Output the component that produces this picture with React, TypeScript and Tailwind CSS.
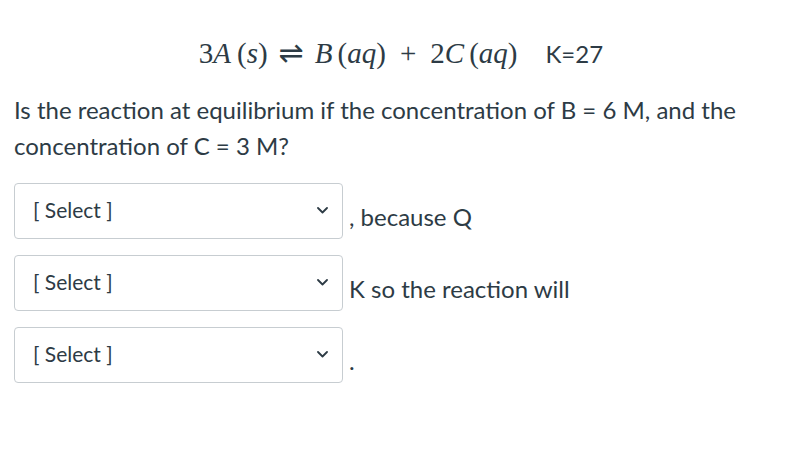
import React from 'react';

const Chevron = () => (
  <svg width="11" height="7" viewBox="0 0 11 7" fill="none" className="shrink-0">
    <path d="M1 1l4.5 4.5L10 1" stroke="#2d3b45" strokeWidth="1.8" strokeLinecap="round" strokeLinejoin="round" />
  </svg>
);

const SelectBox = () => (
  <div className="w-[329px] h-[56px] shrink-0 border border-[#c7cdd1] rounded-[4px] bg-white flex items-center justify-between pl-[18px] pr-[14px]">
    <span className="text-[21px] text-[#2d3b45] -mt-[2px]">[ Select ]</span>
    <Chevron />
  </div>
);

const Mi = ({ children }: { children: React.ReactNode }) => <span className="italic">{children}</span>;

export default function App() {
  return (
    <div className="w-[792px] h-[451px] bg-white text-[#2d3b45] font-['Lato','Noto_Sans',sans-serif] pt-[32px]">
      <div className="flex items-baseline justify-center pl-[10px]">
        <span className="font-['Liberation_Serif','DejaVu_Serif',serif] text-[29px] flex items-baseline">
          <span>3<Mi>A</Mi></span>
          <span className="ml-[6px]">(<Mi>s</Mi>)</span>
          <span className="ml-[11px] font-['DejaVu_Sans',sans-serif] text-[30px] leading-none">⇌</span>
          <span className="ml-[11px]"><Mi>B</Mi></span>
          <span className="ml-[5px]">(<Mi>aq</Mi>)</span>
          <span className="ml-[14px]">+</span>
          <span className="ml-[14px]">2<Mi>C</Mi></span>
          <span className="ml-[5px]">(<Mi>aq</Mi>)</span>
        </span>
        <span className="text-[24px] ml-[28px]">K=27</span>
      </div>
      <p className="px-[14px] mt-[16px] text-[24px] leading-[36px]">
        Is the reaction at equilibrium if the concentration of B = 6 M, and the concentration of C = 3 M?
      </p>
      <div className="flex flex-col gap-[16px] px-[14px] mt-[19px]">
        <div className="flex items-center gap-[6px]">
          <SelectBox />
          <span className="text-[24px] mt-[12px]">, because Q</span>
        </div>
        <div className="flex items-center gap-[6px]">
          <SelectBox />
          <span className="text-[24px] mt-[12px]">K so the reaction will</span>
        </div>
        <div className="flex items-center gap-[6px]">
          <SelectBox />
          <span className="text-[24px] mt-[12px]">.</span>
        </div>
      </div>
    </div>
  );
}
